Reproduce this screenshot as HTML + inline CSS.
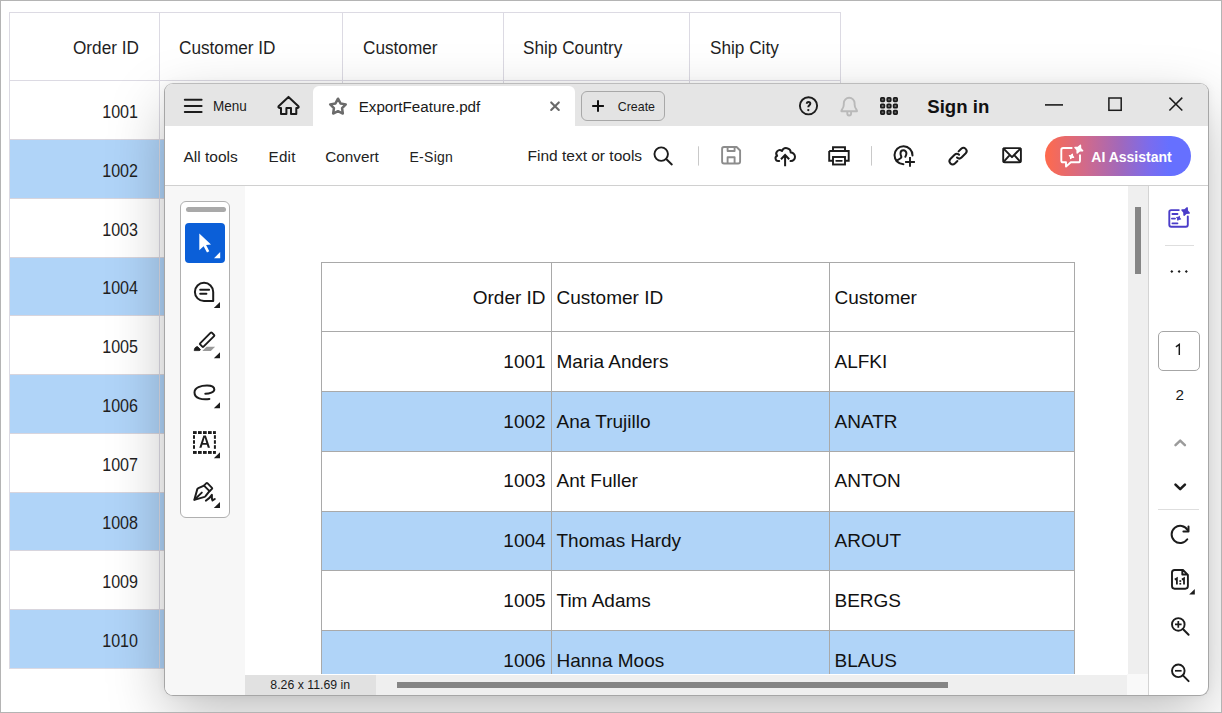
<!DOCTYPE html>
<html><head><meta charset="utf-8">
<style>
*{box-sizing:border-box;margin:0;padding:0}
html,body{width:1222px;height:713px;overflow:hidden;background:#fff;font-family:"Liberation Sans",sans-serif;color:#222}
.t{position:absolute;white-space:nowrap;line-height:1}
</style></head><body>

<div style="position:absolute;left:9px;top:139px;width:832px;height:59px;background:#b0d4f8;"></div>
<div style="position:absolute;left:9px;top:257px;width:832px;height:58px;background:#b0d4f8;"></div>
<div style="position:absolute;left:9px;top:374px;width:832px;height:59px;background:#b0d4f8;"></div>
<div style="position:absolute;left:9px;top:492px;width:832px;height:58px;background:#b0d4f8;"></div>
<div style="position:absolute;left:9px;top:609px;width:832px;height:59px;background:#b0d4f8;"></div>
<div style="position:absolute;left:9px;top:12px;width:832px;height:1px;background:#dcdae3;"></div>
<div style="position:absolute;left:9px;top:80px;width:832px;height:1px;background:#dcdae3;"></div>
<div style="position:absolute;left:9px;top:139px;width:155px;height:1px;background:#d8d5dd;"></div>
<div style="position:absolute;left:9px;top:198px;width:155px;height:1px;background:#d8d5dd;"></div>
<div style="position:absolute;left:9px;top:257px;width:155px;height:1px;background:#d8d5dd;"></div>
<div style="position:absolute;left:9px;top:315px;width:155px;height:1px;background:#d8d5dd;"></div>
<div style="position:absolute;left:9px;top:374px;width:155px;height:1px;background:#d8d5dd;"></div>
<div style="position:absolute;left:9px;top:433px;width:155px;height:1px;background:#d8d5dd;"></div>
<div style="position:absolute;left:9px;top:492px;width:155px;height:1px;background:#d8d5dd;"></div>
<div style="position:absolute;left:9px;top:550px;width:155px;height:1px;background:#d8d5dd;"></div>
<div style="position:absolute;left:9px;top:609px;width:155px;height:1px;background:#d8d5dd;"></div>
<div style="position:absolute;left:9px;top:668px;width:155px;height:1px;background:#dcdae3;"></div>
<div style="position:absolute;left:9px;top:12px;width:1px;height:657px;background:#dcdae3;"></div>
<div style="position:absolute;left:159px;top:12px;width:1px;height:657px;background:#dcdae3;"></div>
<div style="position:absolute;left:342px;top:12px;width:1px;height:72px;background:#dcdae3;"></div>
<div style="position:absolute;left:503px;top:12px;width:1px;height:72px;background:#dcdae3;"></div>
<div style="position:absolute;left:689px;top:12px;width:1px;height:72px;background:#dcdae3;"></div>
<div style="position:absolute;left:840px;top:12px;width:1px;height:72px;background:#dcdae3;"></div>
<div class="t" style="left:73.2px;top:38.763px;font-size:18.0px;color:#1f1f1f;font-weight:normal;transform:scaleX(0.955);transform-origin:0 0">Order ID</div>
<div class="t" style="left:179.2px;top:38.763px;font-size:18.0px;color:#1f1f1f;font-weight:normal;transform:scaleX(0.955);transform-origin:0 0">Customer ID</div>
<div class="t" style="left:362.6px;top:38.763px;font-size:18.0px;color:#1f1f1f;font-weight:normal;transform:scaleX(0.955);transform-origin:0 0">Customer</div>
<div class="t" style="left:523.3px;top:38.763px;font-size:18.0px;color:#1f1f1f;font-weight:normal;transform:scaleX(0.955);transform-origin:0 0">Ship Country</div>
<div class="t" style="left:709.6px;top:38.763px;font-size:18.0px;color:#1f1f1f;font-weight:normal;transform:scaleX(0.955);transform-origin:0 0">Ship City</div>
<div class="t" style="left:-161.8px;top:103.0937px;width:300px;text-align:right;font-size:18.2px;color:#1f1f1f;transform:scaleX(0.885);transform-origin:100% 0">1001</div>
<div class="t" style="left:-161.8px;top:161.86370000000002px;width:300px;text-align:right;font-size:18.2px;color:#1f1f1f;transform:scaleX(0.885);transform-origin:100% 0">1002</div>
<div class="t" style="left:-161.8px;top:220.63370000000003px;width:300px;text-align:right;font-size:18.2px;color:#1f1f1f;transform:scaleX(0.885);transform-origin:100% 0">1003</div>
<div class="t" style="left:-161.8px;top:279.4037px;width:300px;text-align:right;font-size:18.2px;color:#1f1f1f;transform:scaleX(0.885);transform-origin:100% 0">1004</div>
<div class="t" style="left:-161.8px;top:338.17370000000005px;width:300px;text-align:right;font-size:18.2px;color:#1f1f1f;transform:scaleX(0.885);transform-origin:100% 0">1005</div>
<div class="t" style="left:-161.8px;top:396.94370000000004px;width:300px;text-align:right;font-size:18.2px;color:#1f1f1f;transform:scaleX(0.885);transform-origin:100% 0">1006</div>
<div class="t" style="left:-161.8px;top:455.7137px;width:300px;text-align:right;font-size:18.2px;color:#1f1f1f;transform:scaleX(0.885);transform-origin:100% 0">1007</div>
<div class="t" style="left:-161.8px;top:514.4837000000001px;width:300px;text-align:right;font-size:18.2px;color:#1f1f1f;transform:scaleX(0.885);transform-origin:100% 0">1008</div>
<div class="t" style="left:-161.8px;top:573.2537000000001px;width:300px;text-align:right;font-size:18.2px;color:#1f1f1f;transform:scaleX(0.885);transform-origin:100% 0">1009</div>
<div class="t" style="left:-161.8px;top:632.0237000000001px;width:300px;text-align:right;font-size:18.2px;color:#1f1f1f;transform:scaleX(0.885);transform-origin:100% 0">1010</div>
<div id="win" style="position:absolute;left:164px;top:83px;width:1045px;height:613px;border:1px solid #a6a6a6;border-top-color:#bcbcbc;border-radius:9px;overflow:hidden;background:#fff;box-shadow:0 20px 60px -4px rgba(0,0,0,0.27),0 0 8px rgba(0,0,0,0.05)">
</div>
<div id="wc" style="position:absolute;left:165px;top:84px;width:1043px;height:611px;border-radius:8px;overflow:hidden">
<div style="position:absolute;left:0px;top:0px;width:1043px;height:42px;background:#e5e5e5;"></div>
<div style="position:absolute;left:148px;top:2px;width:262px;height:40px;background:#fff;border-radius:6px 6px 0 0"></div>
<div style="position:absolute;left:415.5px;top:7px;width:84px;height:29.5px;background:transparent;border:1px solid #a8a8a8;border-radius:6px;background:#e3e3e3"></div>
<div style="position:absolute;left:0px;top:42px;width:1043px;height:59px;background:#fff;"></div>
<div style="position:absolute;left:0px;top:101px;width:1043px;height:1px;background:#d0d0d0;"></div>
<div style="position:absolute;left:0px;top:102px;width:80px;height:509px;background:#f7f7f7;"></div>
<div style="position:absolute;left:80px;top:102px;width:883px;height:488px;background:#fff;"></div>
<div style="position:absolute;left:963px;top:102px;width:20px;height:488px;background:#efefef;"></div>
<div style="position:absolute;left:970px;top:123px;width:6px;height:67px;background:#858585;"></div>
<div style="position:absolute;left:983px;top:102px;width:1px;height:509px;background:#d4d4d4;"></div>
<div style="position:absolute;left:80px;top:591px;width:882px;height:20px;background:#efefef;"></div>
<div style="position:absolute;left:80px;top:591px;width:131px;height:20px;background:#e1e1e1;"></div>
<div style="position:absolute;left:962px;top:590px;width:21px;height:21px;background:#f9f9f9;"></div>
<div style="position:absolute;left:232px;top:598px;width:551px;height:6px;background:#858585;"></div>
</div>
<div style="position:absolute;left:245px;top:186px;width:883px;height:488px;overflow:hidden">
<div style="position:absolute;left:76px;top:205px;width:753px;height:60px;background:#b0d4f8;"></div>
<div style="position:absolute;left:76px;top:325px;width:753px;height:59px;background:#b0d4f8;"></div>
<div style="position:absolute;left:76px;top:444px;width:753px;height:60px;background:#b0d4f8;"></div>
<div style="position:absolute;left:76px;top:76px;width:754px;height:1px;background:#a9a9a9;"></div>
<div style="position:absolute;left:76px;top:145px;width:754px;height:1px;background:#a9a9a9;"></div>
<div style="position:absolute;left:76px;top:205px;width:754px;height:1px;background:#a9a9a9;"></div>
<div style="position:absolute;left:76px;top:265px;width:754px;height:1px;background:#a9a9a9;"></div>
<div style="position:absolute;left:76px;top:325px;width:754px;height:1px;background:#a9a9a9;"></div>
<div style="position:absolute;left:76px;top:384px;width:754px;height:1px;background:#a9a9a9;"></div>
<div style="position:absolute;left:76px;top:444px;width:754px;height:1px;background:#a9a9a9;"></div>
<div style="position:absolute;left:76px;top:76px;width:1px;height:500px;background:#a9a9a9;"></div>
<div style="position:absolute;left:306px;top:76px;width:1px;height:500px;background:#a9a9a9;"></div>
<div style="position:absolute;left:584px;top:76px;width:1px;height:500px;background:#a9a9a9;"></div>
<div style="position:absolute;left:829px;top:76px;width:1px;height:500px;background:#a9a9a9;"></div>
<div class="t" style="left:0.6000000000000227px;top:102.12px;width:300px;text-align:right;font-size:19.0px;color:#111;">Order ID</div>
<div class="t" style="left:311.5px;top:102.12px;font-size:19.0px;color:#111;font-weight:normal;">Customer ID</div>
<div class="t" style="left:589.5px;top:102.12px;font-size:19.0px;color:#111;font-weight:normal;">Customer</div>
<div class="t" style="left:0.6000000000000227px;top:166.02px;width:300px;text-align:right;font-size:19.0px;color:#111;">1001</div>
<div class="t" style="left:311.5px;top:166.02px;font-size:19.0px;color:#111;font-weight:normal;">Maria Anders</div>
<div class="t" style="left:589.5px;top:166.02px;font-size:19.0px;color:#111;font-weight:normal;">ALFKI</div>
<div class="t" style="left:0.6000000000000227px;top:225.72px;width:300px;text-align:right;font-size:19.0px;color:#111;">1002</div>
<div class="t" style="left:311.5px;top:225.72px;font-size:19.0px;color:#111;font-weight:normal;">Ana Trujillo</div>
<div class="t" style="left:589.5px;top:225.72px;font-size:19.0px;color:#111;font-weight:normal;">ANATR</div>
<div class="t" style="left:0.6000000000000227px;top:285.42px;width:300px;text-align:right;font-size:19.0px;color:#111;">1003</div>
<div class="t" style="left:311.5px;top:285.42px;font-size:19.0px;color:#111;font-weight:normal;">Ant Fuller</div>
<div class="t" style="left:589.5px;top:285.42px;font-size:19.0px;color:#111;font-weight:normal;">ANTON</div>
<div class="t" style="left:0.6000000000000227px;top:345.12px;width:300px;text-align:right;font-size:19.0px;color:#111;">1004</div>
<div class="t" style="left:311.5px;top:345.12px;font-size:19.0px;color:#111;font-weight:normal;">Thomas Hardy</div>
<div class="t" style="left:589.5px;top:345.12px;font-size:19.0px;color:#111;font-weight:normal;">AROUT</div>
<div class="t" style="left:0.6000000000000227px;top:404.82px;width:300px;text-align:right;font-size:19.0px;color:#111;">1005</div>
<div class="t" style="left:311.5px;top:404.82px;font-size:19.0px;color:#111;font-weight:normal;">Tim Adams</div>
<div class="t" style="left:589.5px;top:404.82px;font-size:19.0px;color:#111;font-weight:normal;">BERGS</div>
<div class="t" style="left:0.6000000000000227px;top:464.52px;width:300px;text-align:right;font-size:19.0px;color:#111;">1006</div>
<div class="t" style="left:311.5px;top:464.52px;font-size:19.0px;color:#111;font-weight:normal;">Hanna Moos</div>
<div class="t" style="left:589.5px;top:464.52px;font-size:19.0px;color:#111;font-weight:normal;">BLAUS</div>
</div>
<div class="t" style="left:212.5px;top:99.15px;font-size:14.0px;color:#1a1a1a;font-weight:normal;transform:scaleX(0.965);transform-origin:0 0">Menu</div>
<div class="t" style="left:358.7px;top:99.03px;font-size:15.2px;color:#1a1a1a;font-weight:normal;">ExportFeature.pdf</div>
<div class="t" style="left:617.8px;top:100.5px;font-size:12.4px;color:#1a1a1a;font-weight:normal;">Create</div>
<div class="t" style="left:927.3px;top:98.16px;font-size:18.6px;color:#111;font-weight:bold;">Sign in</div>
<div class="t" style="left:183.5px;top:148.88px;font-size:15.5px;color:#222;font-weight:normal;">All tools</div>
<div class="t" style="left:268.6px;top:149.13px;font-size:15.2px;color:#222;font-weight:normal;letter-spacing:0.2px">Edit</div>
<div class="t" style="left:325.2px;top:149.05px;font-size:15.3px;color:#222;font-weight:normal;">Convert</div>
<div class="t" style="left:409.4px;top:150.15px;font-size:14.0px;color:#222;font-weight:normal;letter-spacing:0.3px">E-Sign</div>
<div class="t" style="left:527.5px;top:147.78px;font-size:15.5px;color:#222;font-weight:normal;">Find text or tools</div>
<div class="t" style="left:270.3px;top:679.29px;font-size:12.3px;color:#1a1a1a;font-weight:normal;">8.26 x 11.69 in</div>
<div class="t" style="left:1175.6px;top:386.65px;font-size:15.3px;color:#1a1a1a;font-weight:normal;">2</div>
<div style="position:absolute;left:1045px;top:136px;width:146px;height:40px;border-radius:20px;background:linear-gradient(90deg,#ff6a4c 0%,#d06a8c 28%,#a068bc 52%,#7a6cee 72%,#6670ff 85%,#6670ff 100%)"></div>
<div class="t" style="left:1091.3px;top:149.95px;font-size:14.0px;color:#fff;font-weight:bold;">AI Assistant</div>
<div style="position:absolute;left:1158px;top:331px;width:42px;height:39.5px;border:1px solid #a6a6a6;border-radius:5px"></div>
<div style="position:absolute;left:180px;top:201px;width:50px;height:317px;border:1px solid #b0b0b0;border-radius:6px;background:#fff"></div>
<div style="position:absolute;left:186px;top:207px;width:40px;height:5px;border-radius:2.5px;background:#a9a9a9"></div>
<div style="position:absolute;left:185px;top:223px;width:40px;height:40px;border-radius:4px;background:#0b5fd8"></div>
<svg style="position:absolute;left:0;top:0" width="1222" height="713" viewBox="0 0 1222 713"><path d="M184.8 99.7H201.6M184.8 105.9H201.6M184.8 112.1H201.6" fill="none" stroke="#1c1c1c" stroke-width="2" stroke-linecap="round" stroke-linejoin="round" stroke-width="2.1"/><path d="M288.5 96.9L278.6 106.2Q277.8 107.6 279.6 107.9H281V114.1H286.4V107.9H291V114.1H296.3V107.9H297.6Q299.3 107.6 298.4 106.2Z" fill="none" stroke="#1c1c1c" stroke-width="2" stroke-linecap="round" stroke-linejoin="round" stroke-width="1.9"/><path d="M338.00 98.70 L340.53 103.42 L345.80 104.37 L342.09 108.23 L342.82 113.53 L338.00 111.20 L333.18 113.53 L333.91 108.23 L330.20 104.37 L335.47 103.42Z" fill="none" stroke="#6b6b6b" stroke-width="2.5" stroke-linejoin="round"/><path d="M551.2 102.4L558.8 110M558.8 102.4L551.2 110" fill="none" stroke="#6a6a6a" stroke-width="2.1" stroke-linecap="round"/><path d="M592.2 105.9H603.9M598 100.2V111.7" fill="none" stroke="#111" stroke-width="2"/><circle cx="808.5" cy="105.8" r="8.6" fill="none" stroke="#1c1c1c" stroke-width="1.9"/><path d="M806.8 103.8Q806.8 101.9 808.5 101.9Q810.3 101.9 810.3 103.6Q810.3 104.8 809.2 105.4Q808.3 106 808.3 107.3" fill="none" stroke="#1c1c1c" stroke-width="2" stroke-linecap="butt"/><circle cx="808.3" cy="110.1" r="1.15" fill="#1c1c1c"/><path d="M841.4 111.2H857Q857.2 110.4 856.3 109.3Q854.6 107.3 854.6 104.5V103.2A5.4 5.4 0 0 0 843.8 103.2V104.5Q843.8 107.3 842.1 109.3Q841.2 110.4 841.4 111.2ZM847.3 111.5V113.6A1.9 1.9 0 0 0 851.1 113.6V111.5" fill="none" stroke="#b9b9b9" stroke-width="1.9" stroke-linejoin="round"/><rect x="880.85" y="97.85" width="3.5" height="3.5" rx="0.8" fill="#666" stroke="#1c1c1c" stroke-width="1.7"/><rect x="880.85" y="104.25" width="3.5" height="3.5" rx="0.8" fill="#666" stroke="#1c1c1c" stroke-width="1.7"/><rect x="880.85" y="110.65" width="3.5" height="3.5" rx="0.8" fill="#666" stroke="#1c1c1c" stroke-width="1.7"/><rect x="887.25" y="97.85" width="3.5" height="3.5" rx="0.8" fill="#666" stroke="#1c1c1c" stroke-width="1.7"/><rect x="887.25" y="104.25" width="3.5" height="3.5" rx="0.8" fill="#666" stroke="#1c1c1c" stroke-width="1.7"/><rect x="887.25" y="110.65" width="3.5" height="3.5" rx="0.8" fill="#666" stroke="#1c1c1c" stroke-width="1.7"/><rect x="893.65" y="97.85" width="3.5" height="3.5" rx="0.8" fill="#666" stroke="#1c1c1c" stroke-width="1.7"/><rect x="893.65" y="104.25" width="3.5" height="3.5" rx="0.8" fill="#666" stroke="#1c1c1c" stroke-width="1.7"/><rect x="893.65" y="110.65" width="3.5" height="3.5" rx="0.8" fill="#666" stroke="#1c1c1c" stroke-width="1.7"/><path d="M1045 104.9H1063" fill="none" stroke="#1c1c1c" stroke-width="1.6"/><rect x="1108.9" y="98" width="12.3" height="12.3" fill="none" stroke="#1c1c1c" stroke-width="1.5"/><path d="M1169.4 97.6L1182.3 110.5M1182.3 97.6L1169.4 110.5" fill="none" stroke="#1c1c1c" stroke-width="1.5"/><circle cx="661.2" cy="154.1" r="6.75" fill="none" stroke="#1c1c1c" stroke-width="1.9"/><path d="M666.2 159.1L671.8 164.4" fill="none" stroke="#1c1c1c" stroke-width="2" stroke-linecap="round" stroke-linejoin="round" stroke-width="2"/><path d="M698.5 146.3V165.6M871.5 146.1V165.6" stroke="#c9c9c9" stroke-width="1"/><path d="M724 147H736.6L740.1 150.5V161.6Q740.1 163.5 738.2 163.5H724Q722.1 163.5 722.1 161.6V148.9Q722.1 147 724 147ZM727.6 147V151H734.6V147M727.6 163.5V157.3H734.6V163.5" fill="none" stroke="#8c8c8c" stroke-width="1.9" stroke-linejoin="round"/><path d="M779.2 161H778.3A2.7 2.7 0 0 1 777.2 155.8A3.4 3.4 0 0 1 782 151A4.5 4.5 0 0 1 790.7 152.6A4.2 4.2 0 0 1 790.9 161H790.5" fill="none" stroke="#1c1c1c" stroke-width="2" stroke-linecap="round" stroke-linejoin="round" stroke-width="1.9"/><path d="M785.1 166.3V155.5M781 159.3L785.1 155L789.2 159.3" fill="none" stroke="#1c1c1c" stroke-width="2" stroke-linecap="butt" stroke-linejoin="miter"/><path d="M833 151V147.3H845V151M829.2 151H848.7V160.8H845M833 160.8H829.2V151" fill="none" stroke="#1c1c1c" stroke-width="1.9" stroke-linejoin="miter"/><rect x="833" y="157" width="12" height="7.5" fill="#fff" stroke="#1c1c1c" stroke-width="1.9"/><path d="M836.2 160.8H841.8" stroke="#1c1c1c" stroke-width="1.8" stroke-linecap="round"/><path d="M912.5 155.4A9 9 0 1 0 903.4 164.2" fill="none" stroke="#1c1c1c" stroke-width="2" stroke-linecap="round" stroke-linejoin="round" stroke-width="1.9"/><path d="M905.3 156.8Q906.4 155.3 906.4 153.3A2.95 2.95 0 1 0 900.5 153.3Q900.5 154.9 901.1 156Q901.8 157.6 900.2 158.5L896.4 160.8" fill="none" stroke="#1c1c1c" stroke-width="2" stroke-linecap="round" stroke-linejoin="round" stroke-width="1.9"/><path d="M905.1 162H914.9M910 157.1V166.7" fill="none" stroke="#1c1c1c" stroke-width="1.9"/><path d="M959.1 154.8A3.2 3.2 0 0 0 954.6 154.8L950.34 159.04A3.2 3.2 0 0 0 954.86 163.56L957.4 161.05M957 157.5A3.2 3.2 0 0 0 961.5 157.5L965.76 153.26A3.2 3.2 0 0 0 961.24 148.74L958.6 151.4" fill="none" stroke="#1c1c1c" stroke-width="2" stroke-linecap="round" stroke-linejoin="round" stroke-width="1.9"/><rect x="1003.2" y="148.1" width="17.7" height="14.1" rx="1.6" fill="none" stroke="#1c1c1c" stroke-width="1.9"/><path d="M1003.6 148.6L1012 157.1L1020.4 148.6M1003.6 161.8L1009 155.8M1020.4 161.8L1015 155.8" fill="none" stroke="#1c1c1c" stroke-width="2" stroke-linecap="round" stroke-linejoin="round" stroke-width="1.8" stroke-linecap="butt"/><path d="M1072.4 148H1063.2Q1061.3 148 1061.3 149.9V160.4Q1061.3 162.3 1063.2 162.3H1066V166.6L1070.8 162.3H1078.1Q1080 162.3 1080 160.4V154.6" fill="none" stroke="#fff" stroke-width="1.9" stroke-linejoin="round"/><path d="M1080.44 145.23 L1080.56 148.39 L1082.67 150.74 L1079.51 150.86 L1077.16 152.97 L1077.04 149.81 L1074.93 147.46 L1078.09 147.34Z" fill="#fff" stroke="#fff" stroke-width="1.4" stroke-linejoin="round"/><path d="M1072.44 154.19 L1072.61 155.95 L1073.71 157.34 L1071.95 157.51 L1070.56 158.61 L1070.39 156.85 L1069.29 155.46 L1071.05 155.29Z" fill="#fff" stroke="#fff" stroke-width="1.1" stroke-linejoin="round"/><path d="M199.3 233.4V250.2L203.6 246.2L207 252.4L209.3 251.2L206.1 245L211 244.6Z" fill="#fff"/><path d="M214 258.2H220.2V252Z" fill="#fff"/><path d="M213.8 308H220V302Z" fill="#1c1c1c"/><path d="M213.8 358.2H220V352.2Z" fill="#1c1c1c"/><path d="M213.8 408.3H220V402.3Z" fill="#1c1c1c"/><path d="M213.8 458.2H220V452.2Z" fill="#1c1c1c"/><path d="M213.8 508H220V502Z" fill="#1c1c1c"/><path d="M204 282.8A9.1 9.1 0 1 0 204 301H213.2V291.9A9.1 9.1 0 0 0 204 282.8Z" fill="none" stroke="#1c1c1c" stroke-width="2" stroke-linecap="round" stroke-linejoin="round" stroke-width="1.9"/><path d="M200.2 289.7H209.1M200.2 293.7H206.4" fill="none" stroke="#1c1c1c" stroke-width="2" stroke-linecap="round" stroke-linejoin="round" stroke-width="1.9"/><g transform="rotate(-45 207.1 339.7)"><rect x="198.8" y="337.3" width="16.6" height="4.8" rx="0.8" fill="none" stroke="#1c1c1c" stroke-width="1.9"/></g><path d="M194.2 350.6C194.2 348 195.8 346.6 197.6 346.6L200.4 349.4C200.4 350.2 199.8 350.6 199 350.6Z" fill="#1c1c1c" stroke="#1c1c1c" stroke-width="0.8"/><path d="M202.3 351L206.6 346.7H215.1L210.8 351Z" fill="#9a9a9a"/><path d="M209.4 399C202 400 194.5 398.5 194.5 392.5C194.5 387.5 201 385.6 207 385.6C211.5 385.6 214.3 387 214.3 389.5C214.3 392.3 209.5 393.8 205.3 393.8" fill="none" stroke="#1c1c1c" stroke-width="2" stroke-linecap="round" stroke-linejoin="round" stroke-width="1.9"/><rect x="193" y="431.1" width="3.7" height="2.9" fill="#1c1c1c"/><rect x="193" y="451" width="3.7" height="2.9" fill="#1c1c1c"/><rect x="198" y="431.1" width="3.7" height="2.9" fill="#1c1c1c"/><rect x="198" y="451" width="3.7" height="2.9" fill="#1c1c1c"/><rect x="203" y="431.1" width="3.7" height="2.9" fill="#1c1c1c"/><rect x="203" y="451" width="3.7" height="2.9" fill="#1c1c1c"/><rect x="208" y="431.1" width="3.7" height="2.9" fill="#1c1c1c"/><rect x="208" y="451" width="3.7" height="2.9" fill="#1c1c1c"/><rect x="213" y="431.1" width="2.9" height="2.9" fill="#1c1c1c"/><rect x="213" y="451" width="2.9" height="2.9" fill="#1c1c1c"/><rect x="193" y="435.2" width="2" height="3.6" fill="#1c1c1c"/><rect x="213.9" y="435.2" width="2" height="3.6" fill="#1c1c1c"/><rect x="193" y="440.2" width="2" height="3.6" fill="#1c1c1c"/><rect x="213.9" y="440.2" width="2" height="3.6" fill="#1c1c1c"/><rect x="193" y="445.2" width="2" height="3.6" fill="#1c1c1c"/><rect x="213.9" y="445.2" width="2" height="3.6" fill="#1c1c1c"/><path d="M199.3 447.7L203.4 435.6H205.9L210 447.7H207.8L206.9 444.8H202.4L201.5 447.7ZM203 442.9H206.3L204.65 437.6Z" fill="#1c1c1c" fill-rule="evenodd"/><path d="M204 485.6L206.4 483.2Q206.9 482.7 207.4 483.2L212 487.8Q212.5 488.3 212 488.8L209.5 491.2Z" fill="none" stroke="#1c1c1c" stroke-width="1.9" stroke-linejoin="round"/><path d="M204 485.6L198.4 488.1Q197.5 488.5 197.2 489.4L194.3 499.9L204.6 496.9Q205.5 496.6 205.9 495.7L209.5 491.2" fill="none" stroke="#1c1c1c" stroke-width="2" stroke-linecap="round" stroke-linejoin="round" stroke-width="1.9"/><path d="M194.8 499.4L201.8 492.6" fill="none" stroke="#1c1c1c" stroke-width="2" stroke-linecap="round" stroke-linejoin="round" stroke-width="1.9"/><path d="M205.9 500.6Q209.6 498.6 211.9 494.8Q211.6 499 212.5 500.4L214.8 499" fill="none" stroke="#1c1c1c" stroke-width="2" stroke-linecap="round" stroke-linejoin="round" stroke-width="1.8"/><path d="M1178.8 210.1H1171.2Q1169.3 210.1 1169.3 212V224.8Q1169.3 226.7 1171.2 226.7H1185.9Q1187.8 226.7 1187.8 224.8V216.4" fill="none" stroke="#4b3dc9" stroke-width="1.9" stroke-linecap="round"/><path d="M1172.4 214H1177.5M1172.4 223.3H1177.5M1171.9 218.6H1175" fill="none" stroke="#4b3dc9" stroke-width="1.8" stroke-linecap="round"/><path d="M1179.46 216.27 L1179.62 217.89 L1180.63 219.16 L1179.01 219.32 L1177.74 220.33 L1177.58 218.71 L1176.57 217.44 L1178.19 217.28Z" fill="#4b3dc9" stroke="#4b3dc9" stroke-width="1.0" stroke-linejoin="round"/><path d="M1187.12 207.91 L1187.27 210.83 L1189.19 213.02 L1186.27 213.17 L1184.08 215.09 L1183.93 212.17 L1182.01 209.98 L1184.93 209.83Z" fill="#4b3dc9" stroke="#4b3dc9" stroke-width="1.5" stroke-linejoin="round"/><path d="M1165 245.5H1194M1158 509.5H1199" stroke="#dedede" stroke-width="1"/><path d="M1171.8 269.9L1173.3 271.4L1171.8 272.9L1170.3 271.4Z" fill="#1c1c1c"/><path d="M1179.1 269.9L1180.6 271.4L1179.1 272.9L1177.6 271.4Z" fill="#1c1c1c"/><path d="M1186.3 269.9L1187.8 271.4L1186.3 272.9L1184.8 271.4Z" fill="#1c1c1c"/><path d="M1175.9 346.9L1179.3 344.5V355" fill="none" stroke="#1a1a1a" stroke-width="1.45" stroke-linejoin="miter"/><path d="M1175.5 445.1L1180.2 440.6L1184.9 445.1" fill="none" stroke="#9b9b9b" stroke-width="2.5" stroke-linecap="round" stroke-linejoin="round"/><path d="M1175.5 484.6L1180.2 489.1L1184.9 484.6" fill="none" stroke="#1c1c1c" stroke-width="2.6" stroke-linecap="round" stroke-linejoin="round"/><path d="M1187.3 539.3A8.6 8.6 0 1 1 1187.6 530" fill="none" stroke="#1c1c1c" stroke-width="2" stroke-linecap="round" stroke-linejoin="round" stroke-width="2.05"/><path d="M1188.5 526.4V531.4H1183.4" fill="none" stroke="#1c1c1c" stroke-width="2" stroke-linecap="round" stroke-linejoin="round" stroke-width="2.05"/><path d="M1174.6 570H1183L1187.9 574.9V586.1Q1187.9 588.7 1185.3 588.7H1174.6Q1172 588.7 1172 586.1V572.6Q1172 570 1174.6 570ZM1182.3 570.3V574.5H1187.6" fill="none" stroke="#1c1c1c" stroke-width="1.9" stroke-linejoin="round"/><path d="M1174.8 579.6L1176.9 578.4V584.6M1181.9 579.6L1184 578.4V584.6" fill="none" stroke="#1c1c1c" stroke-width="1.8"/><rect x="1179.4" y="580.2" width="1.8" height="1.7" fill="#1c1c1c"/><rect x="1179.4" y="582.9" width="1.8" height="1.7" fill="#1c1c1c"/><path d="M1189.2 594.6H1194.8V589Z" fill="#1c1c1c"/><circle cx="1178.3" cy="624.4" r="6.3" fill="none" stroke="#1c1c1c" stroke-width="1.9"/><path d="M1182.9 629.0L1188.6 634.6999999999999" fill="none" stroke="#1c1c1c" stroke-width="2" stroke-linecap="round" stroke-linejoin="round" stroke-width="2"/><path d="M1175 624.4H1181.6M1178.3 621.1V627.6999999999999" fill="none" stroke="#1c1c1c" stroke-width="1.7"/><circle cx="1178.3" cy="670.8" r="6.3" fill="none" stroke="#1c1c1c" stroke-width="1.9"/><path d="M1182.9 675.4L1188.6 681.0999999999999" fill="none" stroke="#1c1c1c" stroke-width="2" stroke-linecap="round" stroke-linejoin="round" stroke-width="2"/><path d="M1175 670.8H1181.6" fill="none" stroke="#1c1c1c" stroke-width="1.7"/></svg>
<div style="position:absolute;left:0;top:0;width:1222px;height:713px;border:1px solid #b4b4b4"></div>
</body></html>
